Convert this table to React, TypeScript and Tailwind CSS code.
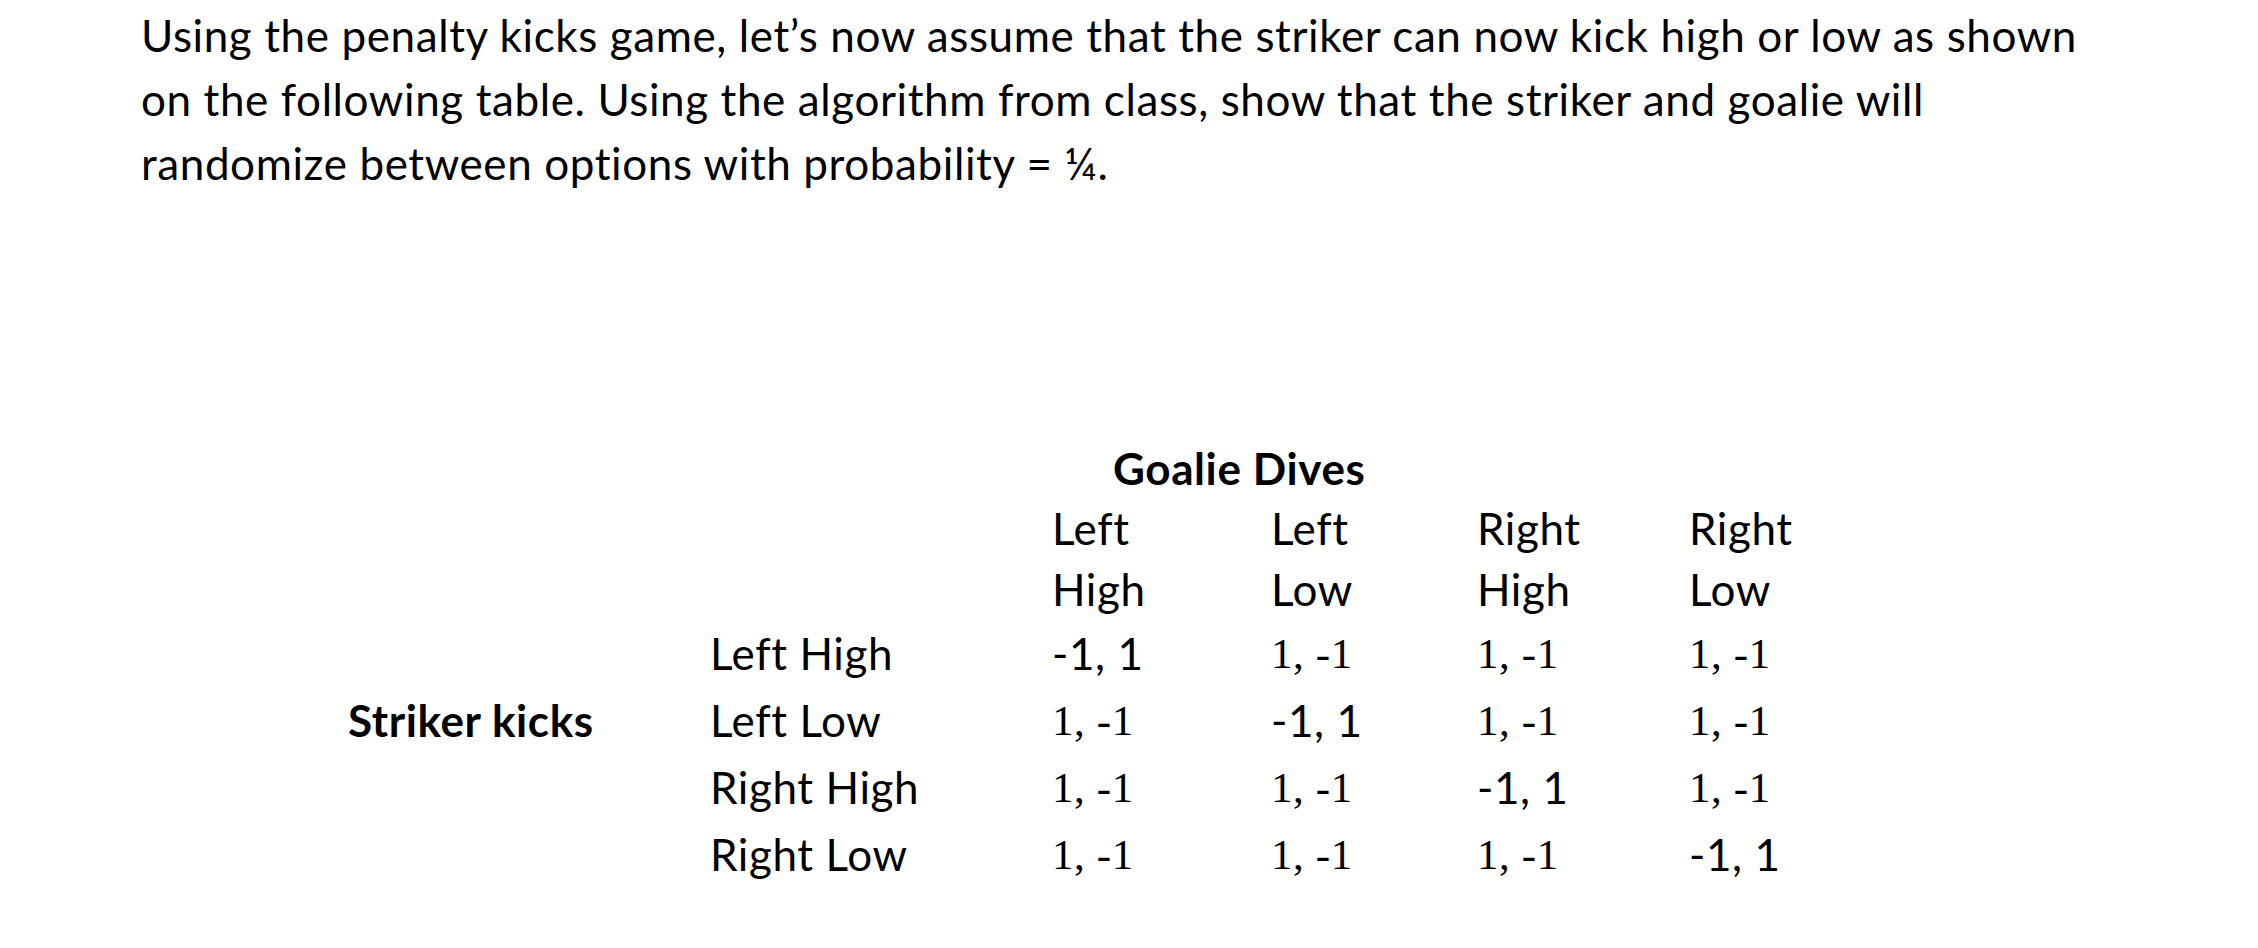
const sans = "font-['Lato','Open_Sans',sans-serif] tracking-[0.6px]";
const serif = "font-['Liberation_Serif','Times_New_Roman',serif]";

type Cell = { v: string; win: boolean };

const rows: { label: string; cells: Cell[] }[] = [
  {
    label: "Left High",
    cells: [
      { v: "-1, 1", win: true },
      { v: "1, -1", win: false },
      { v: "1, -1", win: false },
      { v: "1, -1", win: false },
    ],
  },
  {
    label: "Left Low",
    cells: [
      { v: "1, -1", win: false },
      { v: "-1, 1", win: true },
      { v: "1, -1", win: false },
      { v: "1, -1", win: false },
    ],
  },
  {
    label: "Right High",
    cells: [
      { v: "1, -1", win: false },
      { v: "1, -1", win: false },
      { v: "-1, 1", win: true },
      { v: "1, -1", win: false },
    ],
  },
  {
    label: "Right Low",
    cells: [
      { v: "1, -1", win: false },
      { v: "1, -1", win: false },
      { v: "1, -1", win: false },
      { v: "-1, 1", win: true },
    ],
  },
];

const headers = [
  ["Left", "High"],
  ["Left", "Low"],
  ["Right", "High"],
  ["Right", "Low"],
];

const gridCols = "grid grid-cols-[362px_342px_219px_206px_212px_212px]";

function Payoff({ cell }: { cell: Cell }) {
  if (cell.win) {
    return <div className={`${sans} text-[44px] leading-[67px]`}>{cell.v}</div>;
  }
  return <div className={`${serif} text-[43px] leading-[67px]`}>{cell.v}</div>;
}

export default function App() {
  return (
    <div className="min-h-[948px] w-[2258px] bg-white text-black">
      <div className={`${sans} pl-[141px] pt-[3px] text-[44px] leading-[64px]`}>
        <p>
          Using the penalty kicks game, let’s now assume that the striker can now kick high or low as shown
        </p>
        <p>on the following table. Using the algorithm from class, show that the striker and goalie will</p>
        <p>randomize between options with probability = ¼.</p>
      </div>

      <div className={`${sans} mt-[243px] pl-[348px] text-[44px]`}>
        <div className={gridCols}>
          <div className="col-start-3 col-span-4 pl-[61px] font-bold leading-[60px]">
            Goalie Dives
          </div>
        </div>
        <div className={gridCols}>
          <div />
          <div />
          {headers.map((h, i) => (
            <div key={i} className="leading-[60px]">
              <div>{h[0]}</div>
              <div className="leading-[62px]">{h[1]}</div>
            </div>
          ))}
        </div>
        {rows.map((r, i) => (
          <div key={r.label} className={gridCols}>
            <div className="font-bold leading-[67px]">{i === 1 ? "Striker kicks" : ""}</div>
            <div className="leading-[67px]">{r.label}</div>
            {r.cells.map((c, j) => (
              <Payoff key={j} cell={c} />
            ))}
          </div>
        ))}
      </div>
    </div>
  );
}
